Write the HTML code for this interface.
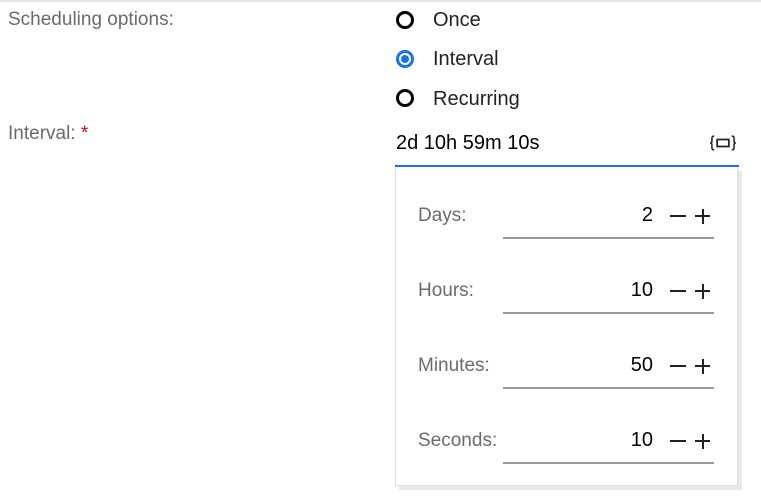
<!DOCTYPE html>
<html><head><style>
body{margin:0;width:761px;height:498px;background:#fff;font-family:"Liberation Sans",sans-serif;position:relative;overflow:hidden}
.a{position:absolute;white-space:nowrap}
.lbl{color:#6b6b6b;font-size:19px}
.r{position:absolute;left:396px;width:12px;height:12px;border:3px solid #000;border-radius:50%}
.rt{position:absolute;left:433px;font-size:20px;color:#222}
.ul{position:absolute;left:503px;width:211px;height:2px;background:#999}
.v{position:absolute;right:108px;font-size:20px;color:#000}
.mi{position:absolute;left:670px;width:16px;height:2px;background:#222}
.pl{position:absolute;left:695px;width:15px;height:2px;background:#222}
.pl:after{content:"";position:absolute;left:6.5px;top:-6.5px;width:2px;height:15px;background:#222}
</style></head><body>
<div class="a" style="left:0;top:0;width:761px;height:2px;background:#e6e6e6"></div>
<div class="a lbl" style="left:8px;top:9px">Scheduling options:</div>
<div class="r" style="top:11px"></div><div class="rt a" style="top:9px">Once</div>
<div class="r" style="top:50px;border-color:#1a73e8"></div><div class="a" style="left:401px;top:55px;width:8px;height:8px;border-radius:50%;background:#1a73e8"></div><div class="rt a" style="top:48px">Interval</div>
<div class="r" style="top:89px"></div><div class="rt a" style="top:88px">Recurring</div>
<div class="a lbl" style="left:8px;top:123px">Interval: <span style="color:#d0021b">*</span></div>
<div class="a" style="left:396px;top:132px;font-size:20px;color:#000">2d 10h 59m 10s</div>
<svg class="a" style="left:709px;top:133px" width="28" height="20" viewBox="0 0 24 16"><path d="M4.5 2 Q2.5 2 2.5 4 V6.5 Q2.5 8 1 8 Q2.5 8 2.5 9.5 V12 Q2.5 14 4.5 14 M19.5 2 Q21.5 2 21.5 4 V6.5 Q21.5 8 23 8 Q21.5 8 21.5 9.5 V12 Q21.5 14 19.5 14" fill="none" stroke="#222" stroke-width="1.3"/><rect x="7" y="5" width="10" height="6" fill="none" stroke="#222" stroke-width="1.5"/></svg>
<div class="a" style="left:395px;top:165px;width:344px;height:2px;background:#1a73e8"></div>
<div class="a" style="left:395px;top:167px;width:341px;height:318px;border:1px solid #ddd;border-top:none;box-shadow:4px 4px 0 #e8e8e8;background:#fff"></div>
<div class="a lbl" style="left:418px;top:205px">Days:</div><div class="v a" style="top:204px">2</div><div class="mi" style="top:215px"></div><div class="pl" style="top:215px"></div><div class="ul" style="top:237px"></div>
<div class="a lbl" style="left:418px;top:280px">Hours:</div><div class="v a" style="top:279px">10</div><div class="mi" style="top:290px"></div><div class="pl" style="top:290px"></div><div class="ul" style="top:312px"></div>
<div class="a lbl" style="left:418px;top:355px">Minutes:</div><div class="v a" style="top:354px">50</div><div class="mi" style="top:365px"></div><div class="pl" style="top:365px"></div><div class="ul" style="top:387px"></div>
<div class="a lbl" style="left:418px;top:430px">Seconds:</div><div class="v a" style="top:429px">10</div><div class="mi" style="top:440px"></div><div class="pl" style="top:440px"></div><div class="ul" style="top:462px"></div>
</body></html>
